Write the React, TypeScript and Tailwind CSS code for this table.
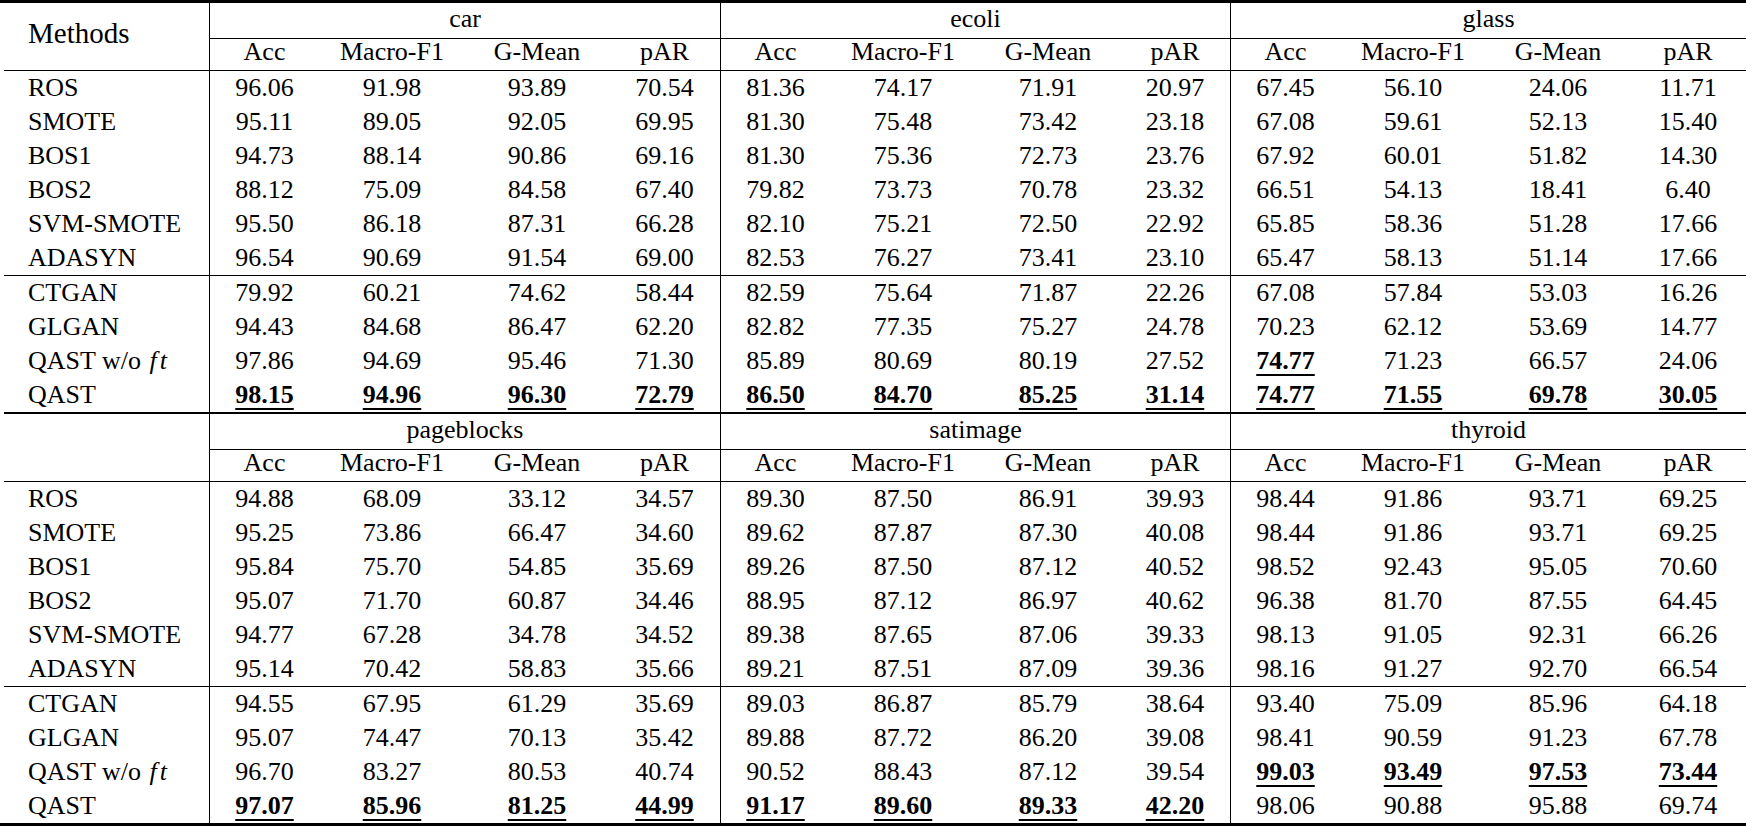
import React from 'react';
import clsx from 'clsx';

const GRID =
  'grid grid-cols-[209px_110px_146px_144px_111px_110px_146px_144px_110px_110px_146px_144px_116px]';

const metrics = ['Acc', 'Macro-F1', 'G-Mean', 'pAR'];

const methods = ['ROS', 'SMOTE', 'BOS1', 'BOS2', 'SVM-SMOTE', 'ADASYN', 'CTGAN', 'GLGAN', 'QAST w/o ft', 'QAST'];

// "*" marks best result (bold + underline)
const blockA = {
  groups: ['car', 'ecoli', 'glass'],
  rows: [
    '96.06 91.98 93.89 70.54 81.36 74.17 71.91 20.97 67.45 56.10 24.06 11.71',
    '95.11 89.05 92.05 69.95 81.30 75.48 73.42 23.18 67.08 59.61 52.13 15.40',
    '94.73 88.14 90.86 69.16 81.30 75.36 72.73 23.76 67.92 60.01 51.82 14.30',
    '88.12 75.09 84.58 67.40 79.82 73.73 70.78 23.32 66.51 54.13 18.41 6.40',
    '95.50 86.18 87.31 66.28 82.10 75.21 72.50 22.92 65.85 58.36 51.28 17.66',
    '96.54 90.69 91.54 69.00 82.53 76.27 73.41 23.10 65.47 58.13 51.14 17.66',
    '79.92 60.21 74.62 58.44 82.59 75.64 71.87 22.26 67.08 57.84 53.03 16.26',
    '94.43 84.68 86.47 62.20 82.82 77.35 75.27 24.78 70.23 62.12 53.69 14.77',
    '97.86 94.69 95.46 71.30 85.89 80.69 80.19 27.52 *74.77 71.23 66.57 24.06',
    '*98.15 *94.96 *96.30 *72.79 *86.50 *84.70 *85.25 *31.14 *74.77 *71.55 *69.78 *30.05',
  ],
};

const blockB = {
  groups: ['pageblocks', 'satimage', 'thyroid'],
  rows: [
    '94.88 68.09 33.12 34.57 89.30 87.50 86.91 39.93 98.44 91.86 93.71 69.25',
    '95.25 73.86 66.47 34.60 89.62 87.87 87.30 40.08 98.44 91.86 93.71 69.25',
    '95.84 75.70 54.85 35.69 89.26 87.50 87.12 40.52 98.52 92.43 95.05 70.60',
    '95.07 71.70 60.87 34.46 88.95 87.12 86.97 40.62 96.38 81.70 87.55 64.45',
    '94.77 67.28 34.78 34.52 89.38 87.65 87.06 39.33 98.13 91.05 92.31 66.26',
    '95.14 70.42 58.83 35.66 89.21 87.51 87.09 39.36 98.16 91.27 92.70 66.54',
    '94.55 67.95 61.29 35.69 89.03 86.87 85.79 38.64 93.40 75.09 85.96 64.18',
    '95.07 74.47 70.13 35.42 89.88 87.72 86.20 39.08 98.41 90.59 91.23 67.78',
    '96.70 83.27 80.53 40.74 90.52 88.43 87.12 39.54 *99.03 *93.49 *97.53 *73.44',
    '*97.07 *85.96 *81.25 *44.99 *91.17 *89.60 *89.33 *42.20 98.06 90.88 95.88 69.74',
  ],
};

function MethodName({ name }: { name: string }) {
  if (name === 'QAST w/o ft') {
    return (
      <span>
        QAST w/o <span className="italic ml-[2px]">f</span>
        <span className="italic ml-[3px]">t</span>
      </span>
    );
  }
  return <span>{name}</span>;
}

function Header({ groups, showMethods }: { groups: string[]; showMethods: boolean }) {
  return (
    <div className={clsx(GRID, 'grid-rows-[36px_31px]')}>
      <div className="row-span-2 pl-[28px] pb-[5px] flex items-center text-[29px]">
        {showMethods ? 'Methods' : ''}
      </div>
      {groups.map((g) => (
        <div key={g} className="col-span-4 border-l border-b border-black text-center leading-[31px]">
          {g}
        </div>
      ))}
      {groups.flatMap((g) =>
        metrics.map((m, i) => (
          <div
            key={g + m}
            className={clsx('text-center leading-[26px]', i === 0 && 'border-l border-black')}
          >
            {m}
          </div>
        )),
      )}
    </div>
  );
}

function DataRow({ name, line }: { name: string; line: string }) {
  const values = line.split(' ');
  return (
    <div className={clsx(GRID, 'h-[34px] leading-[34px]')}>
      <div className="pl-[28px] whitespace-nowrap">
        <MethodName name={name} />
      </div>
      {values.map((v, i) => {
        const best = v.startsWith('*');
        const txt = best ? v.slice(1) : v;
        return (
          <div key={i} className={clsx('text-center', i % 4 === 0 && 'border-l border-black')}>
            {best ? (
              <span className="font-bold underline decoration-[1.5px] underline-offset-[5px]">{txt}</span>
            ) : (
              txt
            )}
          </div>
        );
      })}
    </div>
  );
}

function Block({ groups, rows, first }: { groups: string[]; rows: string[]; first: boolean }) {
  return (
    <div className="flex flex-col">
      <Header groups={groups} showMethods={first} />
      <div className="h-px bg-black ml-[4px]" />
      {rows.slice(0, 6).map((r, i) => (
        <DataRow key={i} name={methods[i]} line={r} />
      ))}
      <div className="h-px bg-black ml-[4px]" />
      {rows.slice(6).map((r, i) => (
        <DataRow key={i + 6} name={methods[i + 6]} line={r} />
      ))}
    </div>
  );
}

export default function App() {
  return (
    <div className="w-[1746px] h-[826px] bg-white text-black text-[26px] font-['Liberation_Serif'] overflow-hidden">
      <div className="h-[3px] bg-black" />
      <Block groups={blockA.groups} rows={blockA.rows} first />
      <div className="h-[2px] bg-black ml-[4px]" />
      <Block groups={blockB.groups} rows={blockB.rows} first={false} />
      <div className="h-[3px] bg-black" />
    </div>
  );
}
